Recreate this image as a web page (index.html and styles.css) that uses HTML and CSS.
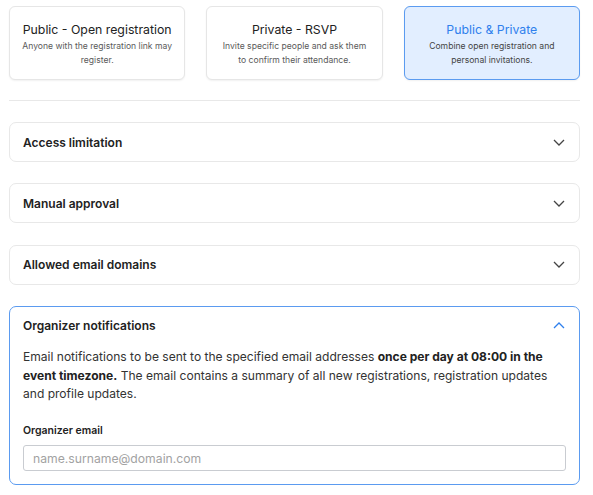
FILE: index.html
```html
<!DOCTYPE html>
<html>
<head>
<meta charset="utf-8">
<link rel="stylesheet" href="styles.css">
</head>
<body>
<div class="page">
  <div class="options">
    <div class="option">
      <div class="option-title">Public - Open registration</div>
      <div class="option-desc">Anyone with the registration link may register.</div>
    </div>
    <div class="option">
      <div class="option-title">Private - RSVP</div>
      <div class="option-desc">Invite specific people and ask them to confirm their attendance.</div>
    </div>
    <div class="option selected">
      <div class="option-title">Public &amp; Private</div>
      <div class="option-desc">Combine open registration and personal invitations.</div>
    </div>
  </div>
  <hr class="divider">
  <div class="sections">
    <div class="acc">
      <div class="acc-head"><span class="acc-title">Access limitation</span>
        <svg class="chev" viewBox="0 0 12 7" width="12" height="7"><path d="M1 1l5 5 5-5" fill="none" stroke="#444" stroke-width="1.3"/></svg></div>
    </div>
    <div class="acc">
      <div class="acc-head"><span class="acc-title">Manual approval</span>
        <svg class="chev" viewBox="0 0 12 7" width="12" height="7"><path d="M1 1l5 5 5-5" fill="none" stroke="#444" stroke-width="1.3"/></svg></div>
    </div>
    <div class="acc">
      <div class="acc-head"><span class="acc-title">Allowed email domains</span>
        <svg class="chev" viewBox="0 0 12 7" width="12" height="7"><path d="M1 1l5 5 5-5" fill="none" stroke="#444" stroke-width="1.3"/></svg></div>
    </div>
    <div class="acc open">
      <div class="acc-head"><span class="acc-title">Organizer notifications</span>
        <svg class="chev" viewBox="0 0 12 7" width="12" height="7"><path d="M1 6l5-5 5 5" fill="none" stroke="#2f80ed" stroke-width="1.3"/></svg></div>
      <div class="acc-body">
        <p class="acc-text">Email notifications to be sent to the specified email addresses <b>once per day at 08:00 in the event timezone.</b> The email contains a summary of all new registrations, registration updates and profile updates.</p>
        <label class="field-label">Organizer email</label>
        <input class="field-input" type="text" placeholder="name.surname@domain.com">
      </div>
    </div>
  </div>
</div>
</body>
</html>
```
FILE: styles.css
```css
* { box-sizing: border-box; }
body {
  margin: 0;
  font-family: Inter, "Noto Sans", sans-serif;
  color: #222;
  background: #fff;
}
.page {
  padding: 6px 13px 0 9px;
}
.options {
  display: grid;
  grid-template-columns: 1fr 1fr 1fr;
  column-gap: 21px;
}
.option {
  height: 74px;
  border: 1px solid #e6e6e6;
  border-radius: 6px;
  box-shadow: 0 1px 2px rgba(0,0,0,0.06);
  text-align: center;
  padding: 14px 6px 0;
  background: #fff;
}
.option-title {
  font-size: 12.3px;
  line-height: 18px;
  color: #222;
  white-space: nowrap;
}
.option-desc {
  font-size: 8.6px;
  line-height: 14px;
  color: #5a5a5a;
  padding: 0 6px;
}
.option.selected {
  background: #e2eeff;
  border-color: #5b9bf0;
}
.option.selected .option-title { color: #2f80ed; }
.option.selected .option-desc { color: #444; }
.divider {
  border: 0;
  border-top: 1px solid #e8e8e8;
  margin: 20px 0 21px;
}
.sections {
  display: flex;
  flex-direction: column;
  gap: 21.3px;
}
.acc {
  border: 1px solid #e8e8e8;
  border-radius: 7px;
  background: #fff;
}
.acc.open { border-color: #5b9bf0; }
.acc-head {
  height: 38px;
  display: flex;
  align-items: center;
  justify-content: space-between;
  padding: 0 14px 0 13px;
}
.acc-title {
  font-size: 12px;
  font-weight: 600;
  color: #222;
}
.chev { display: block; }
.acc-body {
  padding: 0 13px 13px;
}
.acc-text {
  margin: 3px 0 0;
  font-size: 12.05px;
  line-height: 18.8px;
  color: #333;
}
.acc-text b { font-weight: 700; color: #222; }
.field-label {
  display: block;
  margin-top: 20px;
  font-size: 10.5px;
  font-weight: 600;
  color: #222;
  line-height: 14px;
}
.field-input {
  display: block;
  width: 100%;
  height: 26px;
  margin-top: 7px;
  border: 1px solid #c9ccd1;
  border-radius: 3px;
  padding: 0 9px;
  font-family: Inter, "Noto Sans", sans-serif;
  font-size: 12.2px;
  color: #222;
}
.field-input::placeholder { color: #a2a2a2; }
```
